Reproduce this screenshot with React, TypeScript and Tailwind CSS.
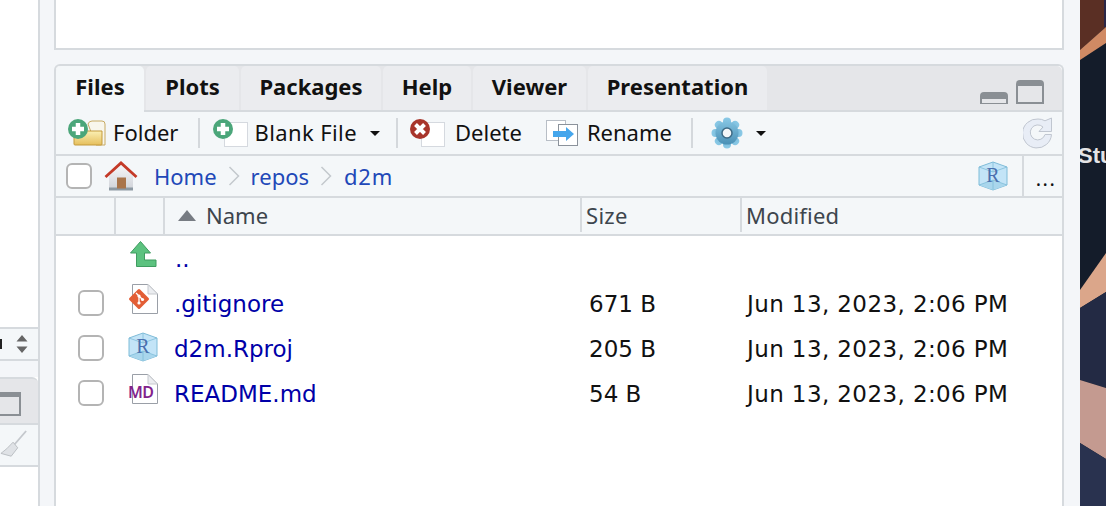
const tabs = [
  { label: "Files", width: "w-[88px]", active: true },
  { label: "Plots", width: "w-[93px]" },
  { label: "Packages", width: "w-[140px]" },
  { label: "Help", width: "w-[88px]" },
  { label: "Viewer", width: "w-[113px]" },
  { label: "Presentation", width: "w-[179px]" },
]

const files = [
  { name: ".gitignore", size: "671 B", icon: "git" },
  { name: "d2m.Rproj", size: "205 B", icon: "rproj" },
  { name: "README.md", size: "54 B", icon: "md" },
]

function PlusBadge() {
  return (
    <g>
      <circle cx="10" cy="10" r="10" fill="#4ba67a" />
      <path d="M10 4v12M4 10h12" stroke="#fff" strokeWidth="4.5" />
    </g>
  )
}

function FolderIcon() {
  return (
    <svg width="38" height="28" viewBox="0 0 38 28" className="shrink-0">
      <defs>
        <linearGradient id="folderFill" x1="0" y1="0" x2="0" y2="1">
          <stop offset="0" stopColor="#fbf0b4" />
          <stop offset="1" stopColor="#e6bf5c" />
        </linearGradient>
      </defs>
      <path d="M20 5q1-3 4-3h10q3 0 3 3v21H28z" fill="#f8f6ec" stroke="#c7aa62" />
      <path d="M7 12h27v13q0 1-1 1H7q-1 0-1-1V13q0-1 1-1z" fill="url(#folderFill)" stroke="#c39a3c" />
      <PlusBadge />
    </svg>
  )
}

function BlankFileIcon({ kind }: { kind: "add" | "delete" }) {
  return (
    <svg width="38" height="28" viewBox="0 0 38 28" className="shrink-0">
      <rect x="11.5" y="3.5" width="23" height="24" fill="#fff" stroke="#d5d9df" />
      {kind === "add" ? (
        <PlusBadge />
      ) : (
        <g>
          <circle cx="10" cy="10" r="10" fill="#a8352b" />
          <path d="M5.500 5.500l9 9M14.500 5.500l-9 9" stroke="#fff" strokeWidth="4" />
        </g>
      )}
    </svg>
  )
}

function RenameIcon() {
  return (
    <svg width="32" height="28" viewBox="0 0 32 28" className="shrink-0">
      <rect x="0.5" y="1.5" width="19" height="20" fill="#fff" stroke="#b8bec6" />
      <rect x="12.5" y="5.5" width="19" height="21" fill="#fff" stroke="#8b929b" />
      <path d="M7 12h13V8l8 7-8 7v-4H7z" fill="#45a6ec" />
    </svg>
  )
}

function GearIcon() {
  const lobes = [0, 45, 90, 135, 180, 225, 270, 315]
  return (
    <svg width="32" height="32" viewBox="0 0 32 32" className="shrink-0">
      <defs>
        <linearGradient id="gearFill" gradientUnits="userSpaceOnUse" x1="0" y1="0" x2="0" y2="32">
          <stop offset="0" stopColor="#8ccbe8" />
          <stop offset="1" stopColor="#3f86ad" />
        </linearGradient>
      </defs>
      {lobes.map((a) => (
        <circle key={a} cx="16" cy="4.500" r="4" fill="url(#gearFill)" transform={`rotate(${a} 16 16)`} />
      ))}
      <circle cx="16" cy="16" r="11.500" fill="url(#gearFill)" />
      <circle cx="16" cy="16" r="5" fill="#f3f6f8" stroke="#3d6a85" strokeWidth="1.500" />
    </svg>
  )
}

function RefreshIcon() {
  return (
    <svg width="30" height="32" viewBox="0 0 30 32" className="shrink-0">
      <path
        d="M15 2a14 14 0 0 1 7 1.800L28.500 1v13.500H16l4-4.500a7.500 7.500 0 1 0 2 7.500h6.500A14.500 14.500 0 1 1 15 2z"
        fill="#e8edf6"
        stroke="#c0c6d0"
      />
    </svg>
  )
}

function HomeIcon() {
  return (
    <svg width="34" height="30" viewBox="0 0 34 30">
      <defs>
        <linearGradient id="wallFill" x1="0" y1="0" x2="0" y2="1">
          <stop offset="0" stopColor="#f6f6f8" />
          <stop offset="1" stopColor="#cfd2d8" />
        </linearGradient>
      </defs>
      <path d="M5 15L17 4l12 11v14H5z" fill="url(#wallFill)" />
      <rect x="5" y="26.500" width="24" height="3" fill="#8d99a3" />
      <rect x="13" y="16.500" width="9" height="11" fill="#a9744a" />
      <path d="M1.500 16L17 2l15.500 14" fill="none" stroke="#c43a28" strokeWidth="2.800" />
    </svg>
  )
}

function RProjIcon({ className = "" }: { className?: string }) {
  return (
    <svg width="30" height="30" viewBox="0 0 30 30" className={className}>
      <path d="M15 1l14 5v18l-14 5-14-5V6z" fill="#c3e4f7" stroke="#7fbcd8" />
      <path d="M1 24l14-5 14 5-14 5z" fill="#a9d6ec" />
      <path d="M1 6l14 5 14-5M1 24l14-5 14 5M15 1v10M15 19v10" fill="none" stroke="#7fbcd8" strokeWidth="0.800" />
      <text x="15" y="21" textAnchor="middle" fontSize="20" fontFamily="'Liberation Serif', serif" fill="#4a6fae">
        R
      </text>
    </svg>
  )
}

function FileIcon({ type }: { type: string }) {
  if (type === "rproj") return <RProjIcon className="mt-[-3px]" />
  return (
    <svg width="32" height="30" viewBox="0 0 32 30" className="mt-[-9px]">
      <path d="M4.500 0.500H20l9.500 9.500v19.500h-25z" fill="#fff" stroke="#9a9fa7" />
      <path d="M20 0.500v9.500h9.500z" fill="#ebedf0" stroke="#c6c9ce" />
      {type === "git" ? (
        <g>
          <rect x="3.500" y="7.500" width="15" height="15" rx="1.500" fill="#e35e36" transform="rotate(45 11 15)" />
          <path d="M8 9l6 6M11 12v7" stroke="#fff" strokeWidth="1.300" fill="none" />
          <circle cx="11" cy="19" r="1.600" fill="#fff" />
          <circle cx="14.500" cy="15.500" r="1.600" fill="#fff" />
          <circle cx="11" cy="12" r="1.600" fill="#fff" />
        </g>
      ) : (
        <text x="0" y="24" fontSize="16" fontWeight="600" letterSpacing="-0.5" fontFamily="'Noto Sans', sans-serif" fill="#82238c">
          MD
        </text>
      )}
    </svg>
  )
}

function Caret({ className = "" }: { className?: string }) {
  return <span className={`h-0 w-0 border-x-[5px] border-t-[5px] border-x-transparent border-t-[#111] ${className}`} />
}

function Checkbox() {
  return <span className="block h-[26px] w-[26px] rounded-[6px] border-[2px] border-[#b4b4b4] bg-white" />
}

function Divider({ className = "" }: { className?: string }) {
  return <span className={`h-[30px] w-[2px] bg-[#d4d8dc] ${className}`} />
}

function Chevron() {
  return (
    <svg width="12" height="22" viewBox="0 0 12 22" className="mx-[11px]">
      <path d="M1.500 2l9 9-9 9" fill="none" stroke="#c4c8cd" strokeWidth="1.500" />
    </svg>
  )
}

function Wallpaper() {
  return (
    <div className="relative h-full w-[26px] overflow-hidden bg-[#141c2a]">
      <svg width="26" height="506" viewBox="0 0 26 506" className="block">
        <rect width="26" height="506" fill="#141c2a" />
        <path d="M0 0h26v27L0 50z" fill="#5a2f24" />
        <path d="M24 0h2v27h-2z" fill="#2a2748" />
        <path d="M0 50L26 27v16L0 60z" fill="#d08a64" />
        <path d="M0 290L26 253v39L0 308z" fill="#dba68a" />
        <path d="M0 308L26 292v96L0 380z" fill="#232a44" />
        <path d="M0 380l26 8v71L0 443z" fill="#c49a90" />
        <path d="M0 443l26 16v47H0z" fill="#29324f" />
      </svg>
      <span className="absolute left-[-2px] top-[139px] font-['Liberation_Sans',sans-serif] text-[22px] font-bold text-[#e4e4e6]">
        Stu
      </span>
    </div>
  )
}

export default function App() {
  return (
    <div className="flex h-[506px] w-[1106px] overflow-hidden bg-[#f4f6f9] font-['Noto_Sans',sans-serif] text-[22px] text-[#111]">
      {/* left edge of the neighbouring panes */}
      <div className="flex w-[40px] shrink-0 flex-col border-r-2 border-[#d6dade] bg-white">
        <div className="h-[329px] border-b-2 border-[#d6dade]" />
        <div className="flex h-[32px] items-center justify-between border-b-2 border-[#d6dade] bg-[#f4f7f9] pr-[10px]">
          <span className="block h-[10px] w-[2px] bg-[#222]" />
          <svg width="12" height="18" viewBox="0 0 12 18">
            <path d="M6 0l5.500 6.500H.5zM6 18l5.500-6.500H.5z" fill="#666" />
          </svg>
        </div>
        <div className="h-[16px] bg-[#f4f6f9]" />
        <div className="flex h-[46px] items-start rounded-tr-[6px] border-t-2 border-[#d6dade] bg-[#e5e6e9] pt-[13px]">
          <svg width="21" height="24" viewBox="0 0 21 24" className="block">
            <path d="M0 23h20V1H0" fill="none" stroke="#8a8f94" strokeWidth="2" />
            <rect width="20" height="5" fill="#8a8f94" />
          </svg>
        </div>
        <div className="flex h-[44px] items-center justify-end border-y-2 border-[#d6dade] bg-[#f4f7f9] pr-[10px]">
          <svg width="30" height="32" viewBox="0 0 30 32">
            <path d="M28 1L15 16" stroke="#c4c8cd" strokeWidth="2" />
            <path d="M14 13l5 6-7 9-11-3q6-4 13-12z" fill="#dfe2e6" stroke="#b8bcc1" />
          </svg>
        </div>
        <div className="flex-1 bg-white" />
      </div>

      <div className="w-[14px] shrink-0" />

      <main className="flex w-[1010px] shrink-0 flex-col">
        <div className="h-[50px] border-x-2 border-b-2 border-[#d6dade] bg-white" />
        <div className="h-[14px]" />

        <section className="flex min-h-0 flex-1 flex-col rounded-t-[6px] border-x-2 border-t-2 border-[#d6dade] bg-white">
          <div className="flex h-[46px] shrink-0 items-stretch rounded-t-[5px] border-b-2 border-[#d6dade] bg-[#e5e6e9]">
            {tabs.map((tab) => (
              <div
                key={tab.label}
                className={`mr-[2px] flex items-center justify-center rounded-t-[5px] pb-[3px] text-[22px] font-bold ${tab.width} ${
                  tab.active ? "relative z-10 mb-[-2px] bg-[#f4f7f9] pb-[5px]" : "bg-[#ebecef]"
                }`}
              >
                {tab.label}
              </div>
            ))}
            <div className="ml-auto flex items-end gap-[8px] pb-[6px] pr-[18px]">
              <svg width="28" height="12" viewBox="0 0 28 12">
                <path d="M1 12V4q0-3 3-3h20q3 0 3 3v8H1" fill="none" stroke="#8a8f94" strokeWidth="2" />
                <path d="M1 1h26v6H1z" fill="#8a8f94" />
              </svg>
              <svg width="28" height="24" viewBox="0 0 28 24">
                <path d="M1 23V4q0-3 3-3h20q3 0 3 3v19z" fill="none" stroke="#8a8f94" strokeWidth="2" />
                <path d="M1 1h26v5H1z" fill="#8a8f94" />
              </svg>
            </div>
          </div>

          <div className="flex h-[44px] shrink-0 items-center border-b-2 border-[#d6dade] bg-[#f4f7f9] pl-[12px] pr-[9px]">
            <FolderIcon />
            <span className="mb-[2px] ml-[7px]">Folder</span>
            <Divider className="ml-[20px]" />
            <span className="ml-[13px]">
              <BlankFileIcon kind="add" />
            </span>
            <span className="mb-[2px] ml-[3px] tracking-[0.4px]">Blank File</span>
            <Caret className="ml-[13px]" />
            <Divider className="ml-[16px]" />
            <span className="ml-[12px]">
              <BlankFileIcon kind="delete" />
            </span>
            <span className="mb-[2px] ml-[7px]">Delete</span>
            <span className="ml-[24px]">
              <RenameIcon />
            </span>
            <span className="mb-[2px] ml-[9px]">Rename</span>
            <Divider className="ml-[19px]" />
            <span className="ml-[18px]">
              <GearIcon />
            </span>
            <Caret className="ml-[13px]" />
            <span className="ml-auto">
              <RefreshIcon />
            </span>
          </div>

          <div className="flex h-[42px] shrink-0 items-stretch border-b-2 border-[#d6dade] bg-[#f4f7f9]">
            <div className="flex flex-1 items-center pl-[10px] text-[#2148b8]">
              <Checkbox />
              <span className="ml-[12px]">
                <HomeIcon />
              </span>
              <span className="ml-[16px]">Home</span>
              <Chevron />
              <span>repos</span>
              <Chevron />
              <span className="ml-[1px] tracking-[0.8px]">d2m</span>
              <span className="ml-auto mr-[14px]">
                <RProjIcon />
              </span>
            </div>
            <div className="w-[40px] border-l-2 border-[#d6dade] pl-[6px] pt-[5px] text-center text-[20px] leading-[36px] tracking-[1.5px]">
              ...
            </div>
          </div>

          <div className="flex h-[38px] shrink-0 border-b-2 border-[#d6dade] bg-[#f4f7f9] text-[#3d454d]">
            <div className="w-[60px] border-r-2 border-[#d6dade]" />
            <div className="w-[49px] border-r-2 border-[#d6dade]" />
            <div className="mb-[2px] flex w-[417px] items-center border-r-2 border-[#d6dade] pl-[13px]">
              <span className="h-0 w-0 border-x-[9px] border-b-[11px] border-x-transparent border-b-[#777c83]" />
              <span className="ml-[10px]">Name</span>
            </div>
            <div className="mb-[2px] flex w-[160px] items-center border-r-2 border-[#d6dade] pl-[4px] tracking-[0.3px]">Size</div>
            <div className="mb-[2px] flex flex-1 items-center pl-[4px] tracking-[0.2px]">Modified</div>
          </div>

          <div className="flex-1 bg-white font-['DejaVu_Sans',sans-serif] text-[23px]">
            <div className="flex h-[45px] items-center">
              <span className="ml-[74px] mt-[-9px] w-[45px]">
                <svg width="27" height="27" viewBox="0 0 27 27" className="block">
                  <path d="M10.500 .5L20.500 12H14.500V19H26V25.500H6.500V12H.5z" fill="#5cc27f" stroke="#3f9c60" />
                </svg>
              </span>
              <span className="mt-[2px] text-[#0000a8]">..</span>
            </div>
            {files.map((file) => (
              <div key={file.name} className="flex h-[45px] items-center">
                <span className="ml-[22px] mt-[-2px]">
                  <Checkbox />
                </span>
                <span className="ml-[24px] w-[46px]">
                  <FileIcon type={file.icon} />
                </span>
                <span className="mt-[2px] w-[415px] text-[#0000a8]">{file.name}</span>
                <span className="mt-[2px] w-[158px]">{file.size}</span>
                <span className="mt-[2px] tracking-[0.4px]">Jun 13, 2023, 2:06 PM</span>
              </div>
            ))}
          </div>
        </section>
      </main>

      <div className="w-[16px] shrink-0" />
      <Wallpaper />
    </div>
  )
}
